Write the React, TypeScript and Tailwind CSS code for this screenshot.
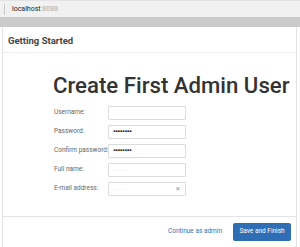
import React from 'react';

const fields = [
  { label: 'Username:', value: '', type: 'text' },
  { label: 'Password:', value: '••••••••', type: 'dots' },
  { label: 'Confirm password:', value: '••••••••', type: 'dots' },
  { label: 'Full name:', value: '', type: 'blur' },
  { label: 'E-mail address:', value: '', type: 'email' },
];

export default function App() {
  return (
    <div className="w-[300px] h-[247px] overflow-hidden bg-white font-['Roboto',sans-serif] text-[#333]">
      {/* Browser address bar */}
      <div className="h-[17px] bg-[#f1f1f1] border-t border-[#e4e4e4] flex items-center pl-[4px]">
        <div className="h-[11px] border-l border-[#c9c9c9] pl-[7px] flex items-center text-[7px] leading-none">
          <span className="text-[#222]">localhost</span>
          <span className="text-[#aaa]">:8088</span>
        </div>
      </div>
      <div className="h-[10px] bg-[#cacaca]" />

      {/* Panel */}
      <div className="h-[220px] ml-[2px] mr-[3px] border-l border-r border-[#e3e3e3] flex flex-col">
        <div className="h-[26px] flex items-center pl-[5px] pt-[3px] border-b border-[#ececec]">
          <span className="text-[9.5px] font-bold text-[#444] leading-none">Getting Started</span>
        </div>

        <div className="flex-1 flex flex-col">
          <h1 className="mt-[21px] ml-[50px] text-[22.2px] leading-none font-medium text-[#333] whitespace-nowrap">
            Create First Admin User
          </h1>
          <div className="mt-[10px] ml-[51px] flex flex-col gap-[5px]">
            {fields.map((f) => (
              <div key={f.label} className="flex items-center h-[14px]">
                <span className="w-[54px] text-[6.5px] text-[#666] whitespace-nowrap">{f.label}</span>
                <div className="w-[78px] h-[14px] border border-[#dcdcdc] rounded-[1px] flex items-center px-[4px] relative">
                  {f.type === 'dots' && (
                    <span className="text-[8px] font-bold tracking-[-0.6px] text-[#222] leading-none">{f.value}</span>
                  )}
                  {f.type === 'blur' && (
                    <span className="text-[5px] text-[#ccc] leading-none">·· ·· ·   ·· ·</span>
                  )}
                  {f.type === 'email' && (
                    <>
                      <span className="text-[5px] text-[#ccc] leading-none">·  ·  ·· ·  ·</span>
                      <span className="absolute right-[5px] top-[2px] text-[8px] text-[#999] leading-none">×</span>
                    </>
                  )}
                </div>
              </div>
            ))}
          </div>
        </div>

        <div className="border-t border-[#e4e4e4] h-[31px] flex items-center justify-end pr-[5px]">
          <span className="text-[6.5px] text-[#3a70b4] mr-[11px]">Continue as admin</span>
          <button className="w-[58px] h-[18px] bg-[#2f6eb5] text-white text-[6.5px] rounded-[2px]">
            Save and Finish
          </button>
        </div>
      </div>
    </div>
  );
}
